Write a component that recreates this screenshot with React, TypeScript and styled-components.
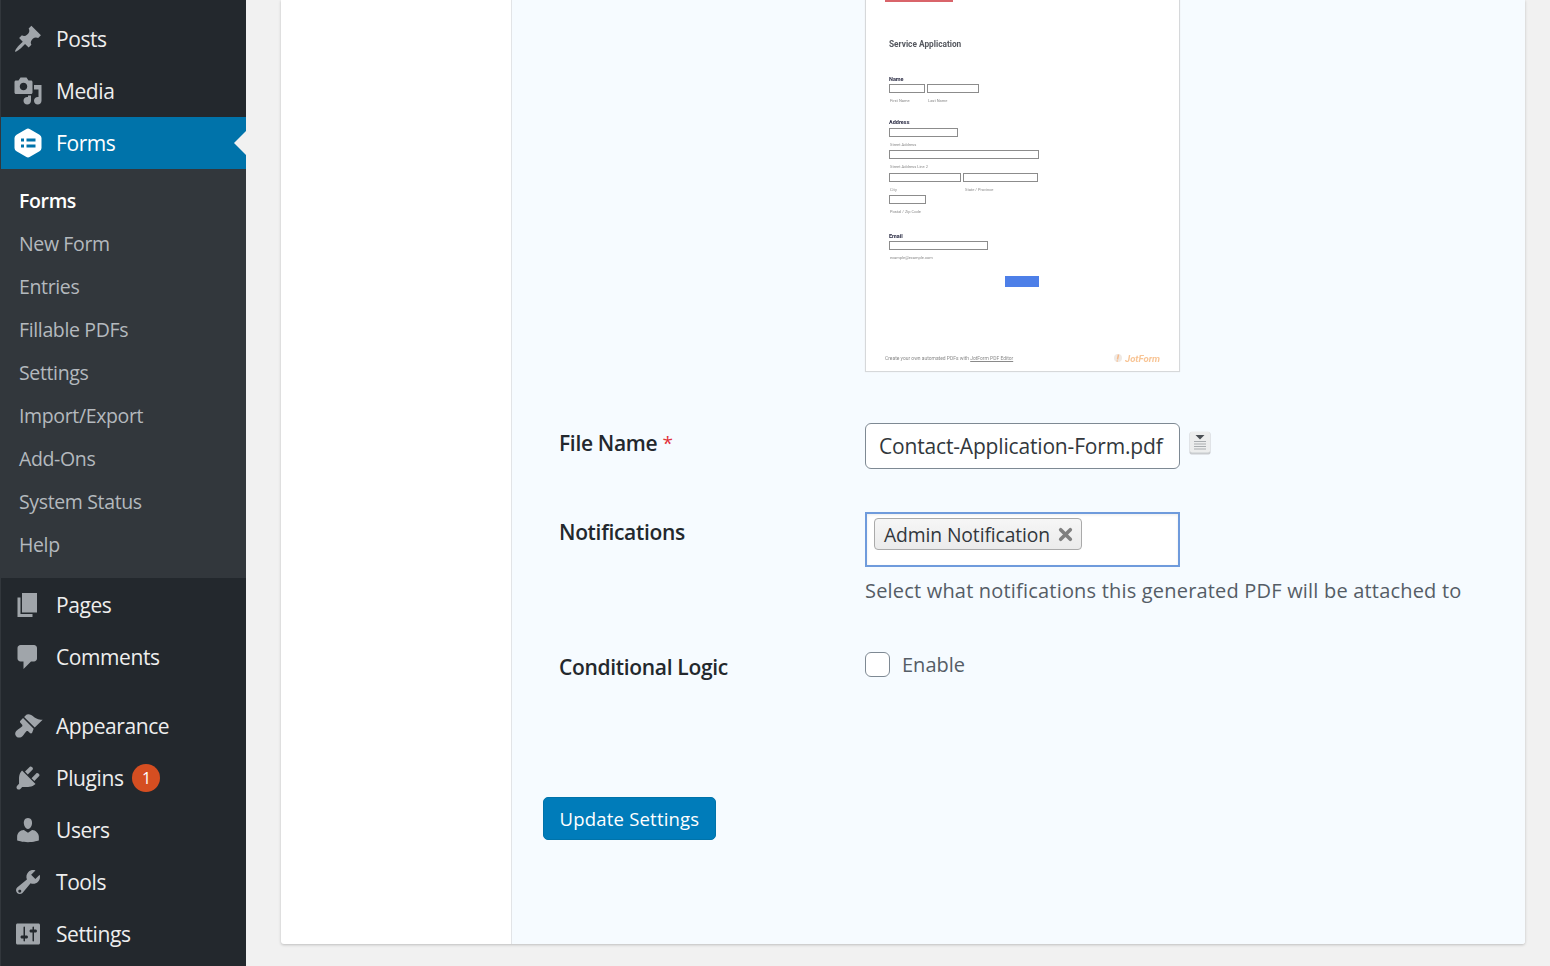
import React from "react";
import styled, { createGlobalStyle } from "styled-components";

const GlobalStyle = createGlobalStyle`
  html, body {
    margin: 0;
    height: 100%;
    overflow: hidden;
    background: #f1f1f1;
    font-family: "Open Sans", "Noto Sans", sans-serif;
  }
  * { box-sizing: border-box; }
`;

const icons: Record<string, string> = {
  posts:
    "M10.44 3.02l1.82-1.82 6.36 6.35-1.83 1.82c-1.05-.68-2.48-.57-3.41.36l-.75.75c-.92.93-1.04 2.35-.35 3.41l-1.83 1.82-2.41-2.41-2.8 2.79c-.42.42-3.38 2.71-3.8 2.29s1.86-3.39 2.28-3.81l2.79-2.79L4.1 9.36l1.83-1.82c1.05.69 2.48.57 3.4-.36l.75-.75c.93-.92 1.05-2.35.36-3.41z",
  media:
    "M13 11V4c0-.55-.45-1-1-1h-1.67L9 1H5L3.67 3H2c-.55 0-1 .45-1 1v7c0 .55.45 1 1 1h10c.55 0 1-.45 1-1zM7 4.5c1.38 0 2.5 1.12 2.5 2.5S8.38 9.5 7 9.5 4.5 8.38 4.5 7 5.62 4.5 7 4.5zM14 6h5v10.5c0 1.38-1.12 2.5-2.5 2.5S14 17.88 14 16.5s1.12-2.5 2.5-2.5c.17 0 .34.02.5.05V9h-3V6zm-4 8.05V13h2v3.5c0 1.38-1.12 2.5-2.5 2.5S7 17.88 7 16.5 8.12 14 9.5 14c.17 0 .34.02.5.05z",
  pages: "M6 15V2h10v13H6zm-1 1h8v2H3V5h2v11z",
  comments:
    "M5 2h9c1.1 0 2 .9 2 2v7c0 1.1-.9 2-2 2h-2l-5 5v-5H5c-1.1 0-2-.9-2-2V4c0-1.1.9-2 2-2z",
  appearance:
    "M14.48 11.06L7.41 3.99l1.5-1.5c.5-.56 2.3-.47 3.51.32 1.21.8 1.43 1.28 2.91 2.1 1.18.64 2.45 1.26 4.45.85zm-.71.71L6.7 4.7 4.93 6.47c-.39.39-.39 1.02 0 1.41l1.06 1.06c.39.39.39 1.03 0 1.42-.6.6-1.43 1.11-2.21 1.69-.35.26-.7.53-1.01.84C1.43 13.71.96 15.65 2.23 16.92s3.21.79 4.05-.05c.31-.31.58-.65.84-1 .58-.79 1.09-1.61 1.69-2.21.39-.39 1.02-.39 1.41 0l1.06 1.06c.39.39 1.02.39 1.41 0z",
  plugins:
    "M13.11 4.36L9.87 7.6 8 5.73l3.24-3.24c.35-.34 1.05-.2 1.56.32.52.51.66 1.21.31 1.55zm-8 1.77l.91-1.12 9.01 9.01-1.19.84c-.71.71-2.63 1.16-3.82 1.16H6.14L4.9 17.26c-.59.59-1.54.59-2.12 0-.59-.58-.59-1.53 0-2.12l1.24-1.24v-3.88c0-1.13.4-3.05 1.09-3.89zm7.26 3.97l3.24-3.24c.34-.35 1.04-.21 1.55.31.52.51.66 1.21.31 1.55l-3.24 3.25z",
  users:
    "M10 9.25c-2.27 0-2.73-3.44-2.73-3.44C7 4.02 7.82 2 9.97 2c2.16 0 2.98 2.02 2.71 3.81 0 0-.41 3.44-2.68 3.44zm0 2.57L12.72 10c2.39 0 4.52 2.33 4.52 4.53v2.49s-3.65 1.13-7.24 1.13c-3.65 0-7.24-1.13-7.24-1.13v-2.49c0-2.25 1.94-4.48 4.47-4.48z",
  tools:
    "M16.68 9.77c-1.34 1.34-3.3 1.67-4.95.99l-5.41 6.52c-.99.99-2.59.99-3.57 0-.99-.98-.99-2.58 0-3.57l6.52-5.42c-.68-1.65-.35-3.61.99-4.95 1.28-1.28 3.12-1.62 4.72-1.06l-2.89 2.89 2.82 2.82 2.86-2.87c.53 1.58.18 3.39-1.09 4.67zM3.81 16.81c.39.39 1.03.39 1.42 0 .38-.39.38-1.03 0-1.42-.39-.39-1.03-.39-1.42 0-.38.39-.38 1.03 0 1.42z",
  settings:
    "M18 16V4c0-.55-.45-1-1-1H3c-.55 0-1 .45-1 1v12c0 .55.45 1 1 1h14c.55 0 1-.45 1-1zM8 11h1c.55 0 1 .45 1 1s-.45 1-1 1H8v1.5c0 .28-.22.5-.5.5s-.5-.22-.5-.5V13H6c-.55 0-1-.45-1-1s.45-1 1-1h1V5.5c0-.28.22-.5.5-.5s.5.22.5.5V11zm5-2h-1c-.55 0-1-.45-1-1s.45-1 1-1h1V5.5c0-.28.22-.5.5-.5s.5.22.5.5V7h1c.55 0 1 .45 1 1s-.45 1-1 1h-1v5.5c0 .28-.22.5-.5.5s-.5-.22-.5-.5V9z",
};

const subItems = [
  "Forms",
  "New Form",
  "Entries",
  "Fillable PDFs",
  "Settings",
  "Import/Export",
  "Add-Ons",
  "System Status",
  "Help",
];

const MenuIcon: React.FC<{ name: string }> = ({ name }) => (
  <IconSvg viewBox="0 0 20 20">
    <path d={icons[name]} fill="#a0a5aa" />
  </IconSvg>
);

const FormsLogo = () => (
  <IconSvg viewBox="0 0 28 30">
    <path
      d="M12 1.2a4 4 0 0 1 4 0l9.5 5.5a4 4 0 0 1 2 3.4v9.8a4 4 0 0 1-2 3.4L16 28.8a4 4 0 0 1-4 0l-9.5-5.5a4 4 0 0 1-2-3.4v-9.8a4 4 0 0 1 2-3.4z"
      fill="#fff"
    />
    <path
      d="M7 10.5h3v3H7zM7 16.5h3v3H7zM12.5 10.5H21.5v3h-9zM12.5 16.5H21.5v3h-9z"
      fill="#0073aa"
    />
  </IconSvg>
);

const TemplateIcon = () => (
  <TemplateSvg viewBox="0 0 22 24">
    <rect x="0.5" y="1" width="21" height="22.5" rx="2" fill="#c9cccf" />
    <rect x="1" y="0.5" width="20" height="21" rx="2" fill="#eceded" />
    <path d="M6.5 4h9l-4.5 4.5z" fill="#4a4f54" />
    <path d="M5 10.5h12M5 13h12M5 15.5h12M5 18h12" stroke="#a9adb0" strokeWidth="1.2" />
  </TemplateSvg>
);

const RemoveIcon = () => (
  <RemoveSvg viewBox="0 0 14 14">
    <path d="M2.5 2.5l9 9M11.5 2.5l-9 9" stroke="#808080" strokeWidth="3.4" strokeLinecap="round" />
  </RemoveSvg>
);

const BrandMark = () => (
  <BrandSvg viewBox="0 0 8 10">
    <circle cx="4" cy="5" r="4" fill="#efe9e4" />
    <path d="M4.5 1.5L3.5 6.5" stroke="#f6bb8c" strokeWidth="1.5" />
    <circle cx="3.2" cy="8" r="0.8" fill="#f6bb8c" />
  </BrandSvg>
);

const DocPreview = () => (
  <Preview>
    <RedBar />
    <DocBody>
      <DocTitle>Service Application</DocTitle>
      <DocHeading $top={27}>Name</DocHeading>
      <DocInputs>
        <DocInput $width={36} />
        <DocInput $width={52} />
      </DocInputs>
      <DocHints>
        <DocHint $width={38}>First Name</DocHint>
        <DocHint>Last Name</DocHint>
      </DocHints>
      <DocHeading $top={15}>Address</DocHeading>
      <DocInputs $top={3}>
        <DocInput $width={69} />
      </DocInputs>
      <DocHints>
        <DocHint>Street Address</DocHint>
      </DocHints>
      <DocInputs>
        <DocInput $width={150} />
      </DocInputs>
      <DocHints>
        <DocHint>Street Address Line 2</DocHint>
      </DocHints>
      <DocInputs $top={3}>
        <DocInput $width={72} />
        <DocInput $width={75} />
      </DocInputs>
      <DocHints>
        <DocHint $width={75}>City</DocHint>
        <DocHint>State / Province</DocHint>
      </DocHints>
      <DocInputs>
        <DocInput $width={37} />
      </DocInputs>
      <DocHints>
        <DocHint>Postal / Zip Code</DocHint>
      </DocHints>
      <DocHeading $top={18}>Email</DocHeading>
      <DocInputs>
        <DocInput $width={99} />
      </DocInputs>
      <DocHints>
        <DocHint>example@example.com</DocHint>
      </DocHints>
      <DocSubmit />
    </DocBody>
    <DocFooter>
      <DocCredit>
        Create your own automated PDFs with <u>JotForm PDF Editor</u>
      </DocCredit>
      <DocBrand>
        <BrandMark />
        JotForm
      </DocBrand>
    </DocFooter>
  </Preview>
);

export default function App() {
  return (
    <Page>
      <GlobalStyle />
      <Sidebar>
        <MenuItem>
          <MenuIcon name="posts" />
          Posts
        </MenuItem>
        <MenuItem>
          <MenuIcon name="media" />
          Media
        </MenuItem>
        <MenuItem $active>
          <FormsLogo />
          Forms
          <ActiveArrow />
        </MenuItem>
        <SubMenu>
          {subItems.map((item, i) => (
            <SubItem key={item} $current={i === 0}>
              {item}
            </SubItem>
          ))}
        </SubMenu>
        <MenuItem>
          <MenuIcon name="pages" />
          Pages
        </MenuItem>
        <MenuItem>
          <MenuIcon name="comments" />
          Comments
        </MenuItem>
        <MenuSeparator />
        <MenuItem>
          <MenuIcon name="appearance" />
          Appearance
        </MenuItem>
        <MenuItem>
          <MenuIcon name="plugins" />
          Plugins
          <Badge>1</Badge>
        </MenuItem>
        <MenuItem>
          <MenuIcon name="users" />
          Users
        </MenuItem>
        <MenuItem>
          <MenuIcon name="tools" />
          Tools
        </MenuItem>
        <MenuItem>
          <MenuIcon name="settings" />
          Settings
        </MenuItem>
      </Sidebar>
      <Main>
        <Card>
          <NavColumn />
          <FormColumn>
            <DocPreview />
            <FileRow>
              <FieldLabel>
                File Name <Required>*</Required>
              </FieldLabel>
              <FileField>
                <FileInput>Contact-Application-Form.pdf</FileInput>
                <TemplateIcon />
              </FileField>
            </FileRow>
            <NotifyRow>
              <FieldLabel>Notifications</FieldLabel>
              <div>
                <TagBox>
                  <Tag>
                    Admin Notification
                    <RemoveIcon />
                  </Tag>
                </TagBox>
                <HelpText>Select what notifications this generated PDF will be attached to</HelpText>
              </div>
            </NotifyRow>
            <LogicRow>
              <FieldLabel>Conditional Logic</FieldLabel>
              <CheckField>
                <CheckBox />
                Enable
              </CheckField>
            </LogicRow>
            <SaveButton>Update Settings</SaveButton>
          </FormColumn>
        </Card>
      </Main>
    </Page>
  );
}

const Page = styled.div`
  display: flex;
  width: 1550px;
  height: 966px;
  overflow: hidden;
`;

const Sidebar = styled.nav`
  flex: 0 0 246px;
  padding-top: 13px;
  background: #23282d;
  border-left: 1px solid #32373c;
`;

const IconSvg = styled.svg`
  flex: 0 0 30px;
  width: 30px;
  height: 30px;
  margin: 0 13px 0 -4px;
`;

const MenuItem = styled.div<{ $active?: boolean }>`
  position: relative;
  display: flex;
  align-items: center;
  height: 52px;
  padding-left: 16px;
  font-size: 21px;
  letter-spacing: -0.42px;
  color: ${(p) => (p.$active ? "#fff" : "#eee")};
  background: ${(p) => (p.$active ? "#0073aa" : "transparent")};
`;

const ActiveArrow = styled.span`
  position: absolute;
  right: 0;
  top: 14px;
  border: 12px solid transparent;
  border-left-width: 0;
  border-right-color: #f1f1f1;
`;

const SubMenu = styled.div`
  display: flex;
  flex-direction: column;
  margin-bottom: 1px;
  padding: 10px 0 12px;
  background: #32373c;
`;

const SubItem = styled.div<{ $current?: boolean }>`
  display: flex;
  align-items: center;
  height: 43px;
  padding-left: 18px;
  font-size: 19.5px;
  letter-spacing: -0.36px;
  font-weight: ${(p) => (p.$current ? 600 : 400)};
  color: ${(p) => (p.$current ? "#fff" : "#b4b9be")};
`;

const MenuSeparator = styled.div`
  height: 17px;
`;

const Badge = styled.span`
  display: flex;
  align-items: center;
  justify-content: center;
  width: 28px;
  height: 28px;
  margin-left: 9px;
  border-radius: 50%;
  background: #d54e21;
  color: #fff;
  font-size: 16px;
  letter-spacing: 0;
`;

const Main = styled.main`
  flex: 1;
  padding: 0 25px 0 35px;
`;

const Card = styled.div`
  display: flex;
  height: 944px;
  overflow: hidden;
  background: #fff;
  border-radius: 0 0 3px 3px;
  box-shadow: 0 1px 3px rgba(0, 0, 0, 0.22);
`;

const NavColumn = styled.div`
  flex: 0 0 231px;
  border-right: 1px solid #e2e4e7;
`;

const FormColumn = styled.div`
  flex: 1;
  background: #f6fbff;
  color: #32373c;
`;

const Preview = styled.div`
  display: flex;
  flex-direction: column;
  width: 315px;
  height: 372px;
  margin-left: 353px;
  padding: 0 19px;
  background: #fff;
  border: solid #d6d8da;
  border-width: 0 1px 1px;
  box-shadow: 0 0 1px #e3e5e7;
`;

const RedBar = styled.div`
  width: 68px;
  height: 2px;
  background: #d9646a;
`;

const DocBody = styled.div`
  flex: 1;
  padding-left: 4px;
  font-family: "Roboto", "Liberation Sans", sans-serif;
  filter: blur(0.35px);
`;

const DocTitle = styled.div`
  margin-top: 37px;
  font-size: 8.3px;
  line-height: 10px;
  font-weight: 700;
  color: #55585f;
`;

const DocHeading = styled.div<{ $top: number }>`
  margin-top: ${(p) => p.$top}px;
  font-size: 5.5px;
  line-height: 6px;
  font-weight: 700;
  color: #2b2c44;
`;

const DocInputs = styled.div<{ $top?: number }>`
  display: flex;
  gap: 1.5px;
  margin-top: ${(p) => p.$top ?? 2}px;
`;

const DocInput = styled.div<{ $width: number }>`
  width: ${(p) => p.$width}px;
  height: 9px;
  background: #fff;
  border: 1px solid #8c8c8c;
`;

const DocHints = styled.div`
  display: flex;
  height: 7px;
  margin-top: 4px;
`;

const DocHint = styled.div<{ $width?: number }>`
  width: ${(p) => (p.$width ? `${p.$width}px` : "auto")};
  padding-left: 1px;
  font-size: 4px;
  line-height: 7px;
  color: #8a8a8a;
`;

const DocSubmit = styled.div`
  width: 34px;
  height: 11px;
  margin: 15px 0 0 116px;
  background: #4d7fe8;
`;

const DocFooter = styled.div`
  display: flex;
  justify-content: space-between;
  align-items: center;
  height: 16px;
  margin-bottom: 5px;
  font-family: "Roboto", "Liberation Sans", sans-serif;
  filter: blur(0.35px);
`;

const DocCredit = styled.div`
  font-size: 4.95px;
  color: #8a8a8a;
`;

const DocBrand = styled.div`
  display: flex;
  align-items: center;
  gap: 3px;
  font-size: 9.5px;
  font-weight: 700;
  font-style: italic;
  color: #f8c596;
`;

const BrandSvg = styled.svg`
  width: 8px;
  height: 10px;
`;

const FieldRow = styled.div`
  display: grid;
  grid-template-columns: 306px 1fr;
  padding-left: 47px;
`;

const FileRow = styled(FieldRow)`
  margin-top: 51px;
`;

const NotifyRow = styled(FieldRow)`
  margin-top: 43px;
`;

const LogicRow = styled(FieldRow)`
  margin-top: 42px;
`;

const FieldLabel = styled.div`
  padding-top: 6px;
  font-size: 21px;
  line-height: 28px;
  font-weight: 600;
  letter-spacing: -0.32px;
  color: #23282d;
`;

const Required = styled.span`
  color: #e2313a;
  font-size: 19px;
  font-weight: 400;
  vertical-align: 1px;
`;

const FileField = styled.div`
  display: flex;
  align-items: flex-start;
  gap: 9px;
`;

const FileInput = styled.div`
  display: flex;
  align-items: center;
  width: 315px;
  height: 46px;
  padding-left: 13px;
  background: #fff;
  border: 1px solid #7e8993;
  border-radius: 6px;
  font-size: 21px;
  letter-spacing: -0.17px;
  white-space: nowrap;
`;

const TemplateSvg = styled.svg`
  width: 22px;
  height: 24px;
  margin-top: 8px;
`;

const TagBox = styled.div`
  width: 315px;
  height: 55px;
  padding: 4px 7px;
  background: #fff;
  border: 2px solid #6f9bdc;
  box-shadow: inset 0 1px 3px rgba(0, 0, 0, 0.08);
`;

const Tag = styled.div`
  display: inline-flex;
  align-items: center;
  height: 32px;
  padding: 0 8px 0 9px;
  background: linear-gradient(#f6f6f6, #ebebeb);
  border: 1px solid #aaa;
  border-radius: 4px;
  font-size: 19.3px;
  letter-spacing: -0.1px;
  color: #32373c;
`;

const RemoveSvg = styled.svg`
  width: 15px;
  height: 15px;
  margin-left: 8px;
`;

const HelpText = styled.div`
  margin-top: 10px;
  font-size: 20px;
  line-height: 28px;
  letter-spacing: 0.19px;
  color: #555d66;
  white-space: nowrap;
`;

const CheckField = styled.div`
  display: flex;
  align-items: center;
  gap: 12px;
  font-size: 20px;
  color: #555d66;
`;

const CheckBox = styled.span`
  width: 25px;
  height: 25px;
  background: #fff;
  border: 1.5px solid #7e8993;
  border-radius: 6px;
`;

const SaveButton = styled.button`
  display: block;
  width: 173px;
  height: 43px;
  margin: 116px 0 0 31px;
  padding: 0;
  background: #007cba;
  border: 1px solid #0073aa;
  border-radius: 5px;
  color: #fff;
  font-family: inherit;
  font-size: 18.5px;
  letter-spacing: 0.2px;
`;
